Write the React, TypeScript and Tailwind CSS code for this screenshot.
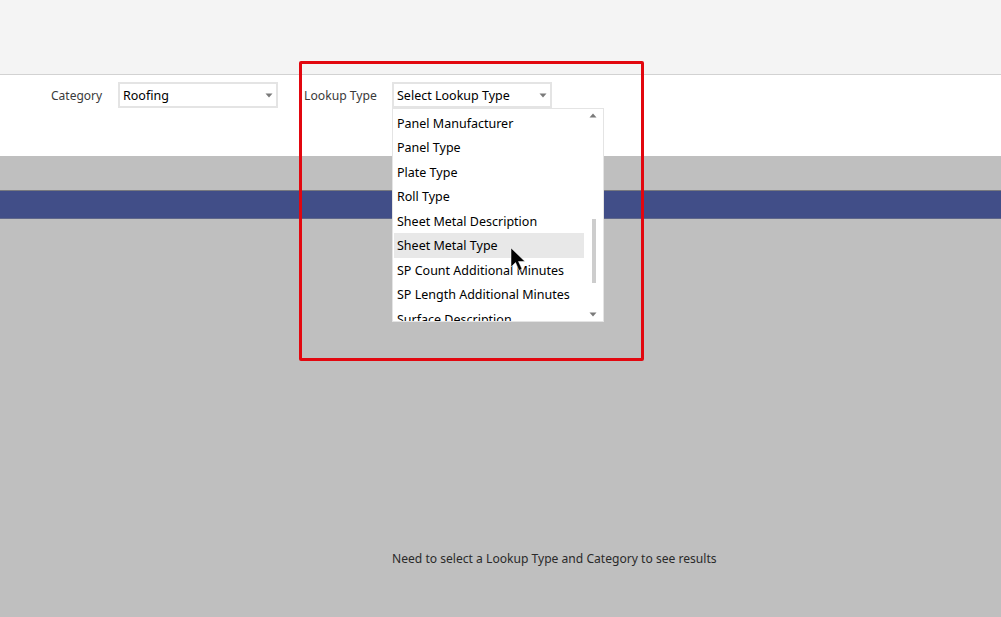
import React from "react";

const items = [
  "Panel Manufacturer",
  "Panel Type",
  "Plate Type",
  "Roll Type",
  "Sheet Metal Description",
  "Sheet Metal Type",
  "SP Count Additional Minutes",
  "SP Length Additional Minutes",
  "Surface Description",
];

function Caret({ className }: { className: string }) {
  return (
    <svg className={className} width="8" height="5" viewBox="0 0 8 5">
      <path d="M0.5 0.5h7L4 4.5z" fill="#7a7a7a" />
    </svg>
  );
}

export default function App() {
  return (
    <div className="relative w-[1001px] h-[617px] overflow-hidden flex flex-col bg-[#bfbfbf] text-[12.5px] text-[#000000] font-['Noto_Sans','Open_Sans',sans-serif]">
      <div className="h-[75px] shrink-0 bg-[#f4f4f4] border-b border-[#d2d2d2]" />

      {/* filter row */}
      <div className="h-[81px] shrink-0 bg-white flex items-start pt-[7px]">
        <span className="ml-[51px] w-[67px] h-[26px] leading-[28px] text-[12px] text-[#3a3a3a]">Category</span>
        <div className="w-[160px] h-[26px] border-2 border-[#e4e4e4] flex items-center justify-between pl-[3px] pr-[3px]">
          <span className="pt-[2px]">Roofing</span>
          <Caret className="" />
        </div>
        <span className="ml-[26px] w-[88px] h-[26px] leading-[28px] text-[12.2px] text-[#3a3a3a]">Lookup Type</span>
        <div className="w-[160px] h-[26px] border-2 border-[#e4e4e4] flex items-center justify-between pl-[3px] pr-[3px]">
          <span className="pt-[2px]">Select Lookup Type</span>
          <Caret className="" />
        </div>
      </div>

      <div className="h-[34px] shrink-0" />
      <div className="h-[29px] shrink-0 bg-[#414e88] border-t border-b border-t-[#77797f] border-b-[#5f678a]" />

      <div className="flex-1">
        <div className="pt-[331px] pl-[392px] text-[12.1px] leading-[18px] text-[#2a2a2a]">
          Need to select a Lookup Type and Category to see results
        </div>
      </div>

      {/* open dropdown */}
      <div className="absolute left-[392px] top-[108px] w-[212px] h-[214px] bg-white border border-[#e4e4e4] overflow-hidden">
        <div className="flex flex-col pl-[1px] pr-[19px] pt-[1.5px]">
          {items.map((item) => (
            <div
              key={item}
              className={
                "h-[24.5px] shrink-0 leading-[26px] pl-[3px] whitespace-nowrap " +
                (item === "Sheet Metal Type" ? "bg-[#e8e8e8]" : "")
              }
            >
              {item}
            </div>
          ))}
        </div>
        <Caret className="absolute right-[6px] top-[4px] rotate-180" />
        <div className="absolute left-[199px] top-[110px] w-[4px] h-[64px] bg-[#cdcdcd]" />
        <Caret className="absolute right-[6px] top-[203px]" />
      </div>

      {/* cursor */}
      <svg className="absolute left-[510px] top-[247px]" width="16" height="27" viewBox="0 0 16 27">
        <path d="M1 1v19l4.5-4.5 3.5 8 3-1.5-3.5-7.5H15z" fill="#000" stroke="#fff" strokeWidth="0.5" />
      </svg>

      {/* annotation */}
      <div className="absolute left-[299px] top-[61px] w-[345px] h-[300px] border-[3px] border-[#e2070f] rounded-[2px]" />
    </div>
  );
}
